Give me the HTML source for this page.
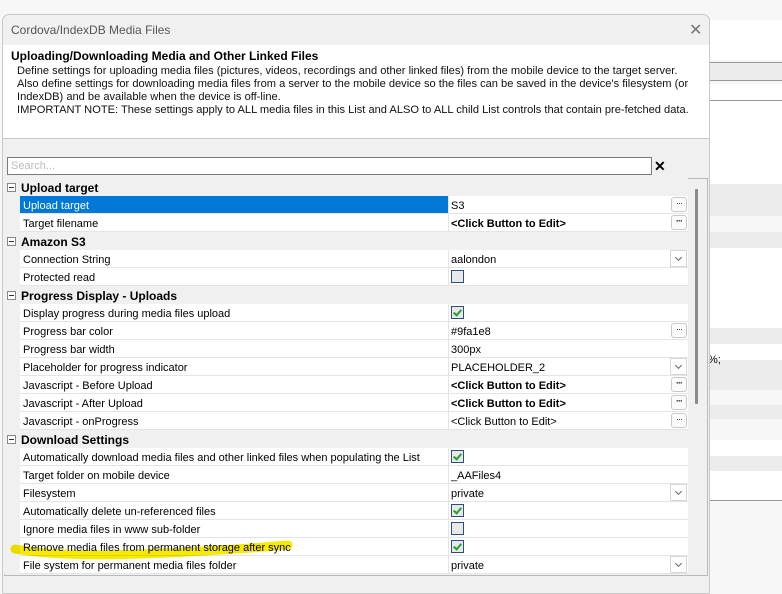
<!DOCTYPE html>
<html><head><meta charset="utf-8"><style>
*{margin:0;padding:0;box-sizing:border-box}
body{width:782px;height:587px;overflow:hidden;background:#f7f7f7;font-family:"Liberation Sans",Arial,sans-serif;font-size:11px;color:#000;position:relative}
.a{position:absolute}
.dlg{position:absolute;left:2px;top:14px;width:708px;height:580px;background:#f0f0f0;border:1px solid #c8c8c8;border-radius:7px 7px 0 0}
.row{position:absolute;left:4px;width:684px;height:18px}
.g{background:#f0f0f0;font-weight:bold;font-size:12px}
.g .pm{position:absolute;left:3px;top:5px;width:9px;height:9px;border:1px solid #888;background:#fff}
.g .pm:after{content:"";position:absolute;left:1px;top:3px;width:5px;height:1px;background:#333}
.g span{position:absolute;left:17px;top:3px}
.it .l{position:absolute;left:0;top:0;width:16px;height:18px;background:#f0f0f0}
.it .n{position:absolute;left:16px;top:0;width:428px;height:18px;background:#fff;border-bottom:1px solid #e4e4e4;padding:4px 0 0 3px;white-space:nowrap;overflow:hidden}
.it .v{position:absolute;left:444px;top:0;width:240px;height:18px;background:#fff;border-bottom:1px solid #e4e4e4;border-left:1px solid #e4e4e4;padding:4px 0 0 2px;white-space:nowrap}
.sel .n{background:#0078d7;color:#fff}
.b{font-weight:bold}
.btn{position:absolute;right:1px;top:1px;width:16px;height:15px;border:1px solid #c9c9c9;border-radius:3px;background:#fbfbfb;font-size:9px;text-align:center;line-height:11px;color:#222;letter-spacing:-1px}
.dd{position:absolute;right:1px;top:0px;width:17px;height:17px;border:1px solid #d6d6d6;background:#fff}
.dd:after{content:"";position:absolute;left:5px;top:4px;width:4px;height:4px;border-right:1px solid #666;border-bottom:1px solid #666;transform:rotate(45deg)}
.cb{position:absolute;left:2px;top:2px;width:13px;height:13px;border:1px solid #2a4e86;background:#e8e8e8}
.cb.c:after{content:"";position:absolute;left:3px;top:1px;width:3px;height:6px;border-right:2px solid #22a02a;border-bottom:2px solid #22a02a;transform:rotate(40deg)}
</style></head><body>
<div class="a" style="left:710px;top:20px;width:72px;height:40px;background:#fff"></div>
<div class="a" style="left:710px;top:62px;width:72px;height:18px;background:#ececec;border-top:1px solid #999"></div>
<div class="a" style="left:710px;top:80px;width:72px;height:2px;border-top:1px solid #999"></div>
<div class="a" style="left:710px;top:84px;width:72px;height:16px;background:#fff"></div>
<div class="a" style="left:710px;top:100px;width:72px;height:88px;background:#fff;border-top:1px solid #999"></div>
<div class="a" style="left:710px;top:184px;width:72px;height:32px;background:#ececec"></div>
<div class="a" style="left:710px;top:232px;width:72px;height:16px;background:#ececec"></div>
<div class="a" style="left:710px;top:248px;width:72px;height:80px;background:#fff"></div>
<div class="a" style="left:710px;top:328px;width:72px;height:16px;background:#ececec"></div>
<div class="a" style="left:710px;top:344px;width:72px;height:16px;background:#fff"></div>
<div class="a" style="left:710px;top:360px;width:72px;height:30px;background:#ececec"></div>
<div class="a" style="left:710px;top:405px;width:72px;height:14px;background:#ececec"></div>
<div class="a" style="left:710px;top:440px;width:72px;height:60px;background:#fff"></div>
<div class="a" style="left:710px;top:500px;width:72px;height:2px;border-top:1px solid #999"></div>
<div class="a" style="left:710px;top:456px;width:72px;height:15px;background:#ececec"></div>
<div class="a" style="left:708px;top:354px;font-size:11px">%;</div>

<div class="dlg">
 <div class="a" style="left:0;top:0;width:706px;height:30px;background:#f0f0f0;border-radius:7px 7px 0 0"></div>
 <div class="a" style="left:8px;top:8px;color:#555;font-size:12px">Cordova/IndexDB Media Files</div>
 <div class="a" style="left:686px;top:5px;color:#777;font-size:16px">✕</div>
 <div class="a" style="left:0;top:30px;width:706px;height:94px;background:#fff;border-bottom:1px solid #c8c8c8"></div>
 <div class="a" style="left:8px;top:34px;font-weight:bold;font-size:12px">Uploading/Downloading Media and Other Linked Files</div>
 <div class="a" style="left:14px;top:50px;line-height:13px;font-size:11.1px;color:#111;white-space:nowrap">Define settings for uploading media files (pictures, videos, recordings and other linked files) from the mobile device to the target server.<br>Also define settings for downloading media files from a server to the mobile device so the files can be saved in the device's filesystem (or<br>IndexDB) and be available when the device is off-line.<br>IMPORTANT NOTE: These settings apply to ALL media files in this List and ALSO to ALL child List controls that contain pre-fetched data.</div>
 <div class="a" style="left:4px;top:142px;width:645px;height:18px;background:#fff;border:1px solid #7a7a7a;color:#bbb;padding:2px 3px">Search...</div>
 <div class="a" style="left:651px;top:143px;font-weight:bold;font-size:14px">✕</div>
 <div class="a" style="left:1px;top:163px;width:704px;height:398px;border:1px solid #b9b9b9;background:#f0f0f0"></div>
 <div class="a" style="left:692px;top:174px;width:3px;height:215px;background:#8a8a8a;border-radius:1px"></div>
</div>

<div class="row g" style="top:178px"><div class="pm"></div><span>Upload target</span></div>
<div class="row it sel" style="top:196px"><div class="l"></div><div class="n">Upload target</div><div class="v">S3<div class="btn">···</div></div></div>
<div class="row it" style="top:214px"><div class="l"></div><div class="n">Target filename</div><div class="v b">&lt;Click Button to Edit&gt;<div class="btn">···</div></div></div>
<div class="row g" style="top:232px"><div class="pm"></div><span>Amazon S3</span></div>
<div class="row it" style="top:250px"><div class="l"></div><div class="n">Connection String</div><div class="v">aalondon<div class="dd"></div></div></div>
<div class="row it" style="top:268px"><div class="l"></div><div class="n">Protected read</div><div class="v"><div class="cb"></div></div></div>
<div class="row g" style="top:286px"><div class="pm"></div><span>Progress Display - Uploads</span></div>
<div class="row it" style="top:304px"><div class="l"></div><div class="n">Display progress during media files upload</div><div class="v"><div class="cb c"></div></div></div>
<div class="row it" style="top:322px"><div class="l"></div><div class="n">Progress bar color</div><div class="v">#9fa1e8<div class="btn">···</div></div></div>
<div class="row it" style="top:340px"><div class="l"></div><div class="n">Progress bar width</div><div class="v">300px</div></div>
<div class="row it" style="top:358px"><div class="l"></div><div class="n">Placeholder for progress indicator</div><div class="v">PLACEHOLDER_2<div class="dd"></div></div></div>
<div class="row it" style="top:376px"><div class="l"></div><div class="n">Javascript - Before Upload</div><div class="v b">&lt;Click Button to Edit&gt;<div class="btn">···</div></div></div>
<div class="row it" style="top:394px"><div class="l"></div><div class="n">Javascript - After Upload</div><div class="v b">&lt;Click Button to Edit&gt;<div class="btn">···</div></div></div>
<div class="row it" style="top:412px"><div class="l"></div><div class="n">Javascript - onProgress</div><div class="v">&lt;Click Button to Edit&gt;<div class="btn">···</div></div></div>
<div class="row g" style="top:430px"><div class="pm"></div><span>Download Settings</span></div>
<div class="row it" style="top:448px"><div class="l"></div><div class="n">Automatically download media files and other linked files when populating the List</div><div class="v"><div class="cb c"></div></div></div>
<div class="row it" style="top:466px"><div class="l"></div><div class="n">Target folder on mobile device</div><div class="v">_AAFiles4</div></div>
<div class="row it" style="top:484px"><div class="l"></div><div class="n">Filesystem</div><div class="v">private<div class="dd"></div></div></div>
<div class="row it" style="top:502px"><div class="l"></div><div class="n">Automatically delete un-referenced files</div><div class="v"><div class="cb c"></div></div></div>
<div class="row it" style="top:520px"><div class="l"></div><div class="n">Ignore media files in www sub-folder</div><div class="v"><div class="cb"></div></div></div>
<div class="row it" style="top:538px"><div class="l"></div><div class="n">Remove media files from permanent storage after sync</div><div class="v"><div class="cb c"></div></div></div>
<div class="row it" style="top:556px"><div class="l"></div><div class="n">File system for permanent media files folder</div><div class="v">private<div class="dd"></div></div></div>

<svg class="a" style="left:0;top:0;mix-blend-mode:multiply" width="782" height="587"><path d="M15 549 Q60 557 140 554 Q220 551 288 545" fill="none" stroke="#f5ea00" stroke-width="9" stroke-linecap="round"/></svg>
</body></html>
